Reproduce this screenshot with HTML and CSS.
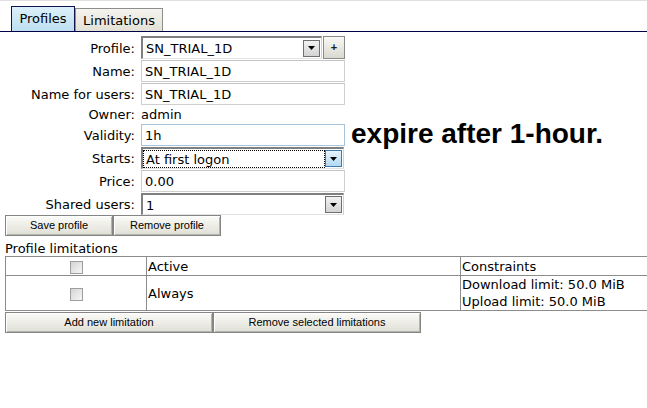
FILE: index.html
```html
<!DOCTYPE html>
<html>
<head>
<meta charset="utf-8">
<link rel="stylesheet" href="styles.css">
</head>
<body>
<div class="tabbar">
  <div class="tab tab-active">Profiles</div>
  <div class="tab tab-idle">Limitations</div>
</div>
<div class="content">
  <div class="form">
    <div class="lbl lbl-first">Profile:</div>
    <div class="field">
      <div class="select select-profile">
        <span class="val">SN_TRIAL_1D</span>
        <span class="arrow"><svg width="7" height="4" viewBox="0 0 7 4"><polygon points="0,0 7,0 3.5,4" fill="#000"/></svg></span>
      </div>
      <div class="plus">+</div>
    </div>

    <div class="lbl">Name:</div>
    <div class="field"><input class="inp" type="text" value="SN_TRIAL_1D"></div>

    <div class="lbl">Name for users:</div>
    <div class="field"><input class="inp" type="text" value="SN_TRIAL_1D"></div>

    <div class="lbl lbl-owner">Owner:</div>
    <div class="field owner">admin</div>

    <div class="lbl">Validity:</div>
    <div class="field"><input class="inp inp-hover" type="text" value="1h"><span class="note">expire after 1-hour.</span></div>

    <div class="lbl">Starts:</div>
    <div class="field">
      <div class="select select-wide">
        <span class="val focus">At first logon</span>
        <span class="arrow arrow-blue"><svg width="7" height="4" viewBox="0 0 7 4"><polygon points="0,0 7,0 3.5,4" fill="#000"/></svg></span>
      </div>
    </div>

    <div class="lbl">Price:</div>
    <div class="field"><input class="inp" type="text" value="0.00"></div>

    <div class="lbl">Shared users:</div>
    <div class="field">
      <div class="select select-wide">
        <span class="val">1</span>
        <span class="arrow"><svg width="7" height="4" viewBox="0 0 7 4"><polygon points="0,0 7,0 3.5,4" fill="#000"/></svg></span>
      </div>
    </div>
  </div>

  <div class="btnrow">
    <div class="btn btn-s">Save profile</div>
    <div class="btn btn-s">Remove profile</div>
  </div>

  <div class="section">Profile limitations</div>

  <div class="tablewrap">
    <table class="limits">
      <colgroup><col class="c1"><col class="c2"><col class="c3"></colgroup>
      <tr class="r1">
        <td class="cbcell"><span class="cb"></span></td>
        <td>Active</td>
        <td>Constraints</td>
      </tr>
      <tr class="r2">
        <td class="cbcell"><span class="cb"></span></td>
        <td>Always</td>
        <td>Download limit: 50.0 MiB<br>Upload limit: 50.0 MiB</td>
      </tr>
    </table>
  </div>

  <div class="btnrow btnrow-low">
    <div class="btn btn-l">Add new limitation</div>
    <div class="btn btn-l">Remove selected limitations</div>
  </div>
</div>
</body>
</html>
```
FILE: styles.css
```css
html, body {
  margin: 0;
  padding: 0;
  overflow: hidden;
  background: #fff;
}
body {
  width: 647px;
  height: 408px;
  font-family: "DejaVu Sans", Verdana, sans-serif;
  font-size: 13px;
  color: #000;
}

.tabbar {
  display: flex;
  align-items: flex-end;
  height: 30px;
  border-top: 1px solid #e0e0e0;
  border-bottom: 1px solid #000048;
  padding-left: 11px;
}
.tab {
  box-sizing: border-box;
  text-align: center;
  line-height: 15px;
  padding-top: 4px;
  border: 1px solid;
  border-bottom: none;
}
.tab-active {
  width: 64px;
  height: 25px;
  background: linear-gradient(#dcf0f9, #bddff0);
  border-color: #14144c;
}
.tab-idle {
  width: 88px;
  height: 23px;
  background: linear-gradient(#f4f3ee, #e3e1d5);
  border-color: #8e8e8e;
}

.content {
  padding: 4px 0 0 5px;
}

.form {
  display: grid;
  grid-template-columns: 130px auto;
  grid-template-rows: 23px 22px 22px 17px 22px 22px 22px 22px;
  column-gap: 6px;
  row-gap: 1px;
}
.lbl {
  text-align: right;
  line-height: 22px;
  padding-top: 1px;
  white-space: nowrap;
}
.lbl-first { padding-top: 2px; }
.lbl-owner { line-height: 18px; padding-top: 0; }

.field {
  display: flex;
  align-items: flex-start;
}
.owner {
  line-height: 18px;
}

.inp {
  box-sizing: border-box;
  width: 204px;
  height: 22px;
  margin: 0;
  border: 1px solid #cfcfcf;
  border-top-color: #c4c4c4;
  padding: 1px 3px 0 3px;
  font-family: "DejaVu Sans", Verdana, sans-serif;
  font-size: 13px;
  color: #000;
  background: #fff;
  outline: none;
}
.inp-hover {
  border-color: #a6c4dc;
}
.note {
  margin-left: 6px;
  font-family: "Liberation Sans", Arial, sans-serif;
  font-weight: bold;
  font-size: 28px;
  line-height: 20px;
  white-space: nowrap;
}

.select {
  box-sizing: border-box;
  display: flex;
  align-items: center;
  height: 23px;
  border-top: 2px solid #7f7f7f;
  border-left: 2px solid #7f7f7f;
  border-right: 1px solid #d2d2d2;
  border-bottom: 1px solid #e2e2e2;
  background: #fff;
}
.select-profile { width: 181px; }
.select-wide { width: 203px; height: 22px; }
.val {
  flex: 1;
  padding-left: 3px;
  padding-top: 1px;
  line-height: 17px;
  white-space: nowrap;
}
.focus {
  box-sizing: border-box;
  height: 18px;
  padding-left: 2px;
  padding-top: 0;
  border: 1px dotted #000;
}
.arrow {
  box-sizing: border-box;
  width: 17px;
  height: 17px;
  margin-right: 1px;
  display: flex;
  align-items: center;
  justify-content: center;
  border: 1px solid #6f6f6f;
  background: linear-gradient(#f2f2f2, #d3d3d3);
}
.arrow-blue {
  border-color: #3b7cb2;
  background: linear-gradient(#e6f4fc, #b3d9f3);
}
.plus {
  box-sizing: border-box;
  width: 22px;
  height: 23px;
  margin-left: 1px;
  border: 1px solid #8a8a8a;
  background: linear-gradient(#f8f8f4, #dad9d0);
  font-family: "Liberation Sans", Arial, sans-serif;
  font-weight: bold;
  font-size: 11px;
  line-height: 20px;
  text-align: center;
  color: #1a1a1a;
}

.btnrow {
  display: flex;
}
.btnrow-low {
  margin-top: 1px;
}
.btn {
  box-sizing: border-box;
  height: 21px;
  border: 1px solid #858585;
  box-shadow: inset 1px 1px 0 #ffffff, inset -1px -1px 0 #b4b4ae;
  background: linear-gradient(#fbfbf8, #e0dfd6);
  font-family: "Liberation Sans", Arial, sans-serif;
  font-size: 11px;
  line-height: 19px;
  text-align: center;
  color: #000;
}
.btn-s { width: 108px; }
.btn-l { width: 208px; }

.section {
  height: 20px;
  box-sizing: border-box;
  padding-top: 5px;
  line-height: 15px;
}

.tablewrap {
  width: 642px;
  overflow: hidden;
}
.limits {
  border-collapse: collapse;
  table-layout: fixed;
  width: 700px;
}
.c1 { width: 141px; }
.c2 { width: 314px; }
.c3 { width: 245px; }
.limits td {
  border: 1px solid #8c8c8c;
  padding: 0 1px;
  line-height: 17px;
  vertical-align: middle;
  white-space: nowrap;
}
.r1 td { height: 18px; }
.cbcell { text-align: center; }
.cb {
  display: inline-block;
  vertical-align: middle;
  box-sizing: border-box;
  width: 13px;
  height: 13px;
  border: 1px solid #9e9e9e;
  background: linear-gradient(135deg, #d4d4d4, #f6f6f6);
}
```
